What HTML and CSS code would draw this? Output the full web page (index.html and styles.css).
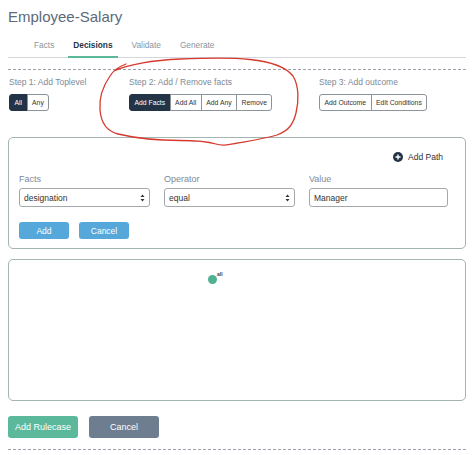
FILE: index.html
```html
<!DOCTYPE html>
<html lang="en">
<head>
  <meta charset="UTF-8" />
  <meta name="viewport" content="width=device-width, initial-scale=1" />
  <title>Employee-Salary</title>
  <link rel="stylesheet" href="styles.css">
</head>
<body>
  <div class="page">
    <h1 class="title">Employee-Salary</h1>

    <div class="tabs">
      <div class="tab">Facts</div>
      <div class="tab active">Decisions</div>
      <div class="tab">Validate</div>
      <div class="tab">Generate</div>
    </div>

    <div class="divider"></div>

    <div class="steps">
      <div class="step">
        <div class="step-label">Step 1: Add Toplevel</div>
        <div class="btn-group">
          <button class="seg selected">All</button>
          <button class="seg">Any</button>
        </div>
      </div>
      <div class="step">
        <div class="step-label">Step 2: Add / Remove facts</div>
        <div class="btn-group">
          <button class="seg selected">Add Facts</button>
          <button class="seg">Add All</button>
          <button class="seg">Add Any</button>
          <button class="seg">Remove</button>
        </div>
      </div>
      <div class="step">
        <div class="step-label">Step 3: Add outcome</div>
        <div class="btn-group">
          <button class="seg">Add Outcome</button>
          <button class="seg">Edit Conditions</button>
        </div>
      </div>
    </div>

    <div class="panel condition">
      <div class="add-path">
        <svg class="plus" width="10" height="10" viewBox="0 0 10 10">
          <circle cx="5" cy="5" r="5" fill="#243447"/>
          <path d="M5 2.5v5M2.5 5h5" stroke="#fff" stroke-width="1.4"/>
        </svg>
        <span>Add Path</span>
      </div>

      <div class="fields">
        <div class="field">
          <div class="field-label">Facts</div>
          <div class="select">
            <span>designation</span>
            <svg width="5" height="8" viewBox="0 0 5 8"><path d="M0.5 3L2.5 0.5L4.5 3ZM0.5 5L2.5 7.5L4.5 5Z" fill="#333"/></svg>
          </div>
        </div>
        <div class="field">
          <div class="field-label">Operator</div>
          <div class="select">
            <span>equal</span>
            <svg width="5" height="8" viewBox="0 0 5 8"><path d="M0.5 3L2.5 0.5L4.5 3ZM0.5 5L2.5 7.5L4.5 5Z" fill="#333"/></svg>
          </div>
        </div>
        <div class="field">
          <div class="field-label">Value</div>
          <div class="input">Manager</div>
        </div>
      </div>

      <div class="actions">
        <button class="btn blue">Add</button>
        <button class="btn blue">Cancel</button>
      </div>
    </div>

    <div class="panel tree">
      <div class="node"></div>
      <div class="node-label">all</div>
    </div>

    <div class="footer">
      <button class="btn-lg green">Add Rulecase</button>
      <button class="btn-lg grey">Cancel</button>
    </div>

    <div class="divider bottom"></div>
  </div>

  <!-- hand drawn annotation round step 2 -->
  <svg class="scribble" width="474" height="455" viewBox="0 0 474 455">
    <path d="M114 71 C127 65 152 60 181 59 C206 58 231 57.5 250 59.5 C270 61.5 285 66 293 76 C299 86 299 101 296 113 C293 125 288 131 277 135 C263 139 249 141 235 143.5 C227 145 222 146 216 144 C206 141 195 140.5 180 140.5 C160 140.5 135 138 118 134 C106 131 101 122 100 110 C99 98 103 86 110 76 C113 71 118 67 126 64"
      fill="none" stroke="#d63a2f" stroke-width="1.3" stroke-linecap="round"/>
  </svg>
</body>
</html>
```

FILE: styles.css
```css
body {
  margin: 0;
  background: #fff;
  font-family: "Liberation Sans", Arial, sans-serif;
  color: #333;
  position: relative;
}

.page {
  padding: 0 8px;
}

.title {
  margin: 0;
  padding-top: 8px;
  font-size: 15px;
  line-height: 18px;
  font-weight: normal;
  color: #5c6a79;
}

.tabs {
  display: flex;
  gap: 9px;
  margin-top: 13px;
  padding-left: 21px;
  border-bottom: 1px solid #d4d8dc;
}

.tab {
  padding: 0 5px 6px;
  font-size: 8.3px;
  line-height: 12px;
  color: #8a96a2;
}

.tab.active {
  color: #243447;
  font-weight: bold;
  border-bottom: 2px solid #5cb89b;
  margin-bottom: -1px;
  padding-bottom: 5px;
}

.divider {
  margin-top: 11px;
  border-top: 1px dashed #9aa3ab;
}

.steps {
  display: grid;
  grid-template-columns: 120px 190px 1fr;
  margin-top: 7px;
}

.step-label {
  font-size: 8.5px;
  line-height: 11px;
  color: #7d8a97;
  padding-left: 1px;
}

.btn-group {
  display: flex;
  margin-top: 6px;
  padding-left: 1px;
}

.seg {
  height: 17px;
  padding: 0 4.5px;
  margin: 0;
  margin-left: -1px;
  font-family: inherit;
  font-size: 6.8px;
  color: #333;
  background: #fff;
  border: 1px solid #8c9399;
  border-radius: 0;
}

.seg:first-child {
  margin-left: 0;
  border-radius: 3px 0 0 3px;
}

.seg:last-child {
  border-radius: 0 3px 3px 0;
}

.seg.selected {
  background: #243447;
  border-color: #243447;
  color: #fff;
}

.panel {
  border: 1px solid #a3b5b0;
  border-radius: 5px;
}

.condition {
  margin-top: 26px;
  padding: 13px 17px 9px 10px;
}

.add-path {
  display: flex;
  justify-content: flex-end;
  align-items: center;
  gap: 5px;
  height: 12px;
  margin-right: 5px;
  font-size: 8.5px;
  color: #333;
}

.plus {
  display: block;
}

.fields {
  display: grid;
  grid-template-columns: 131px 131px 1fr;
  gap: 14px;
  margin-top: 11px;
}

.field-label {
  font-size: 9px;
  line-height: 11px;
  color: #7d8a97;
  margin-bottom: 3px;
}

.select,
.input {
  box-sizing: border-box;
  height: 19px;
  display: flex;
  align-items: center;
  justify-content: space-between;
  padding: 0 4px 0 4px;
  border: 1px solid #a3a8ad;
  border-radius: 3px;
  font-size: 8.5px;
  color: #333;
}

.input {
  justify-content: flex-start;
}

.actions {
  display: flex;
  gap: 10px;
  margin-top: 15px;
}

.btn {
  width: 50px;
  height: 17px;
  margin: 0;
  padding: 0;
  border: none;
  border-radius: 3px;
  font-family: inherit;
  font-size: 8.5px;
  color: #fff;
}

.blue {
  background: #55a8d9;
}

.tree {
  position: relative;
  margin-top: 10px;
  height: 140px;
}

.node {
  position: absolute;
  left: 199px;
  top: 15px;
  width: 9px;
  height: 9px;
  border-radius: 50%;
  background: #4fb193;
}

.node-label {
  position: absolute;
  left: 208px;
  top: 11px;
  font-size: 5px;
  font-weight: bold;
  color: #444;
}

.footer {
  display: flex;
  gap: 11px;
  margin-top: 15px;
}

.btn-lg {
  width: 70px;
  height: 22px;
  margin: 0;
  padding: 0;
  border: none;
  border-radius: 3px;
  font-family: inherit;
  font-size: 9px;
  color: #fff;
}

.green {
  background: #5cb89b;
}

.grey {
  background: #6e7d90;
}

.divider.bottom {
  margin-top: 11px;
}

.scribble {
  position: absolute;
  top: 0;
  left: 0;
  pointer-events: none;
}
```
